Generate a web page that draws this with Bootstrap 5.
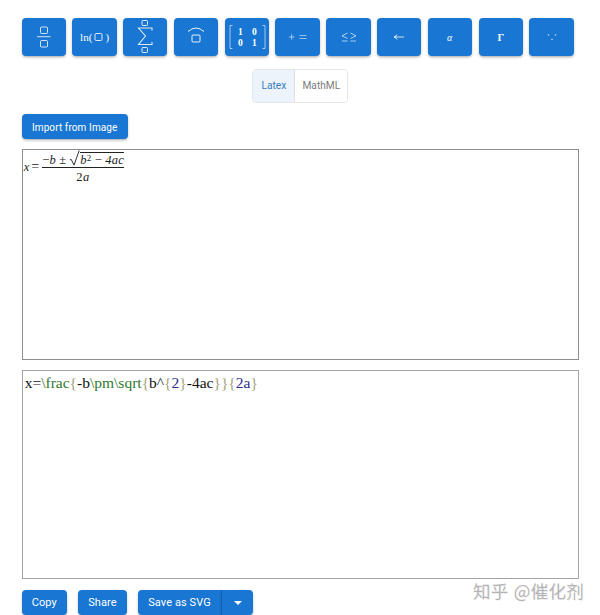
<!DOCTYPE html>
<html lang="en"><head><meta charset="utf-8"><title>Formula editor</title>
<link href="https://cdn.jsdelivr.net/npm/bootstrap@5.3.0/dist/css/bootstrap.min.css" rel="stylesheet">
<style>
html,body{height:615px;overflow:hidden;background:#fff}
body{font-family:Roboto,"Liberation Sans",sans-serif;position:relative}
.page-wrap{padding:18px 21px 0 21.7px}
.sym-bar{gap:6.4px;margin-left:-.2px}
.mui-btn{background:#1976d2;border:0;color:#fff;border-radius:4px;box-shadow:0 2px 3px -1px rgba(0,0,0,.25),0 1px 3px rgba(0,0,0,.14);font-family:Roboto,sans-serif;font-size:11px;letter-spacing:.1px;padding:1px 0 0;display:flex;align-items:center;justify-content:center;height:25px}
.mui-btn:hover{background:#1976d2;color:#fff}
.sym-btn{width:44.4px;height:38px;flex:none;padding:0}
.sym-btn svg{display:block}
.sym-btn text{font-family:"Liberation Serif",serif;fill:#fff}
.mode-row{margin-top:13px;height:34px}
.mode-group{border:1px solid #e3e6e9;border-radius:4px;overflow:hidden;display:flex;width:96px}
.mode-item{font-size:10.2px;display:flex;align-items:center;justify-content:center;background:#fff;color:#7a7a7a}
.mode-on{width:42px;background:#edf3fa;color:#3a7dbd;border-right:1px solid #dde1e5}
.mode-off{flex:1}
.import-btn{width:106px;margin-top:11px;font-size:10px}
.preview-box{height:211px;margin-top:10px;border:1px solid #8e8e8e;padding:0}
.formula{display:flex;align-items:center;font-family:"Liberation Serif",serif;font-style:italic;font-size:12.5px;color:#222;padding:0 0 0 1px;line-height:1}
.formula .eq{font-style:normal;margin:0 3px 0 2px;font-size:14px}
.frac{display:inline-flex;flex-direction:column;align-items:center}
.frac-top{border-bottom:1px solid #222;padding:0 0 1px 0;display:flex;align-items:flex-end;white-space:pre;letter-spacing:.2px}
.frac-bot{padding-top:3px;letter-spacing:.5px}
.up{font-style:normal}
.rad{display:inline-flex;align-items:flex-end;margin-left:3px}
.rad-body{border-top:1px solid #222;padding-top:1px;white-space:pre}
.formula sup{font-size:9px;font-style:normal;top:-.3em;line-height:0}
.code-box{height:209px;margin-top:10px;border:1px solid #a3a3a3;padding:3px 2px;font-family:"Liberation Serif",serif;font-size:15.5px;line-height:18px;color:#111}
.tk-cmd{color:#2f7a2f}
.tk-br{color:#a3a37e}
.tk-num{color:#2b2b8c}
.action-row{margin-top:11px;gap:11px;margin-left:-.2px}
.copy-btn{width:45.5px}
.share-btn{width:49px}
.split-wrap{width:115px;display:flex}
.split-main{width:84px;border-radius:4px 0 0 4px;border-right:1px solid #1565c0}
.split-caret{flex:1;border-radius:0 4px 4px 0;padding:0}
.caret-shape{width:0;height:0;border-left:4px solid transparent;border-right:4px solid transparent;border-top:4px solid #fff}
.watermark{position:absolute;left:473px;top:581px;font-family:"Noto Sans CJK SC",sans-serif;font-size:17.5px;line-height:20px;color:#b4b4b4;white-space:nowrap;letter-spacing:.3px;word-spacing:1px;text-shadow:1px 1px 0 rgba(0,0,0,.06)}
</style></head>
<body>
<div class="page-wrap">
  <div class="d-flex sym-bar">
    <button class="btn mui-btn sym-btn" aria-label="fraction"><svg width="24" height="30" viewBox="0 0 24 30" fill="none" stroke="#fff" stroke-opacity=".8"><rect x="8.500" y="5" width="7" height="6.500" rx="1"/><path d="M5 14.700h13.500"/><rect x="8.500" y="18.500" width="7" height="6.500" rx="1"/></svg></button>
    <button class="btn mui-btn sym-btn" aria-label="log"><svg width="32" height="20" viewBox="0 0 32 20" fill="none"><text x="2" y="14" font-size="11" stroke="none">ln(</text><rect x="17" y="6.500" width="7" height="7" rx="1.200" stroke="#fff" stroke-opacity=".85"/><text x="27.500" y="14" font-size="11" stroke="none">)</text></svg></button>
    <button class="btn mui-btn sym-btn" aria-label="sum"><svg width="24" height="36" viewBox="0 0 24 36" fill="none" stroke="#fff" stroke-opacity=".85"><rect x="9" y="1.500" width="5.500" height="5" rx=".8"/><path d="M19 11.500v-2.500H5.500l7 8-7 8.500h13.500v-2.500" stroke-width="1.100"/><rect x="9" y="28.500" width="5.500" height="5" rx=".8"/></svg></button>
    <button class="btn mui-btn sym-btn" aria-label="hat"><svg width="24" height="24" viewBox="0 0 24 24" fill="none" stroke="#fff" stroke-opacity=".9"><path d="M4 6.500Q12 -.5 20 6.500"/><rect x="8" y="10" width="8" height="7" rx="1"/></svg></button>
    <button class="btn mui-btn sym-btn" aria-label="matrix"><svg width="38" height="28" viewBox="0 0 38 28" fill="none"><path d="M4.500 2.500H2v23h2.500M34.500 2.500H37v23h-2.500" stroke="#fff" stroke-opacity=".6"/><text x="10" y="12" font-size="9.500" font-weight="700" stroke="none">1</text><text x="24" y="12" font-size="9.500" font-weight="700" stroke="none">0</text><text x="10" y="23" font-size="9.500" font-weight="700" stroke="none">0</text><text x="24" y="23" font-size="9.500" font-weight="700" stroke="none">1</text></svg></button>
    <button class="btn mui-btn sym-btn" aria-label="plus equals"><svg width="28" height="16" viewBox="0 0 28 16" fill="none" stroke="#fff" stroke-opacity=".55"><path d="M5 8h5.500M7.700 5.200v5.600M15.500 6.500h7M15.500 9.500h7"/></svg></button>
    <button class="btn mui-btn sym-btn" aria-label="less greater"><svg width="28" height="16" viewBox="0 0 28 16" fill="none" stroke="#fff" stroke-opacity=".65"><path d="M13.500 4L8 6.800l5.500 2.700M8 12h5.500M16.500 4L22 6.800l-5.500 2.700M16.500 12H22"/></svg></button>
    <button class="btn mui-btn sym-btn" aria-label="arrow"><svg width="12" height="10" viewBox="0 0 12 10" fill="none" stroke="#fff" stroke-opacity=".8"><path d="M11 5H1.500M4 2.500Q3.500 4.200 1 5Q3.500 5.800 4 7.500"/></svg></button>
    <button class="btn mui-btn sym-btn" aria-label="alpha"><svg width="14" height="14" viewBox="0 0 14 14"><text x="4" y="10.500" font-size="10" font-style="italic">α</text></svg></button>
    <button class="btn mui-btn sym-btn" aria-label="gamma"><svg width="14" height="14" viewBox="0 0 14 14"><text x="3.500" y="10.500" font-size="10.500" font-weight="700">Γ</text></svg></button>
    <button class="btn mui-btn sym-btn" aria-label="because"><svg width="14" height="12" viewBox="0 0 14 12" fill="#fff" fill-opacity=".75"><circle cx="3.500" cy="4" r=".8"/><circle cx="10.500" cy="4" r=".8"/><circle cx="7" cy="8.500" r=".8"/></svg></button>
  </div>
  <div class="d-flex justify-content-center mode-row">
    <div class="mode-group" role="group">
      <div class="mode-item mode-on">Latex</div>
      <div class="mode-item mode-off">MathML</div>
    </div>
  </div>
  <button class="btn mui-btn import-btn">Import from Image</button>
  <div class="preview-box">
    <div class="formula"><span>x</span><span class="eq">=</span>
      <span class="frac"><span class="frac-top"> <span class="up">−</span>b <span class="up">±</span><span class="rad"><svg width="11" height="16" viewBox="0 0 11 17" fill="none" stroke="#222"><path d="M0.500 10.500L2 10 5 16 10.500 .5"/></svg><span class="rad-body">b<sup>2</sup> <span class="up">−</span> 4ac</span></span></span><span class="frac-bot"><span class="up">2</span>a</span></span>
    </div>
  </div>
  <div class="code-box">x=<span class="tk-cmd">\frac</span><span class="tk-br">{</span>-b<span class="tk-cmd">\pm\sqrt</span><span class="tk-br">{</span>b^<span class="tk-br">{</span><span class="tk-num">2</span><span class="tk-br">}</span>-4ac<span class="tk-br">}</span><span class="tk-br">}</span><span class="tk-br">{</span><span class="tk-num">2a</span><span class="tk-br">}</span></div>
  <div class="d-flex action-row">
    <button class="btn mui-btn copy-btn">Copy</button>
    <button class="btn mui-btn share-btn">Share</button>
    <div class="split-wrap">
      <button class="btn mui-btn split-main">Save as SVG</button>
      <button class="btn mui-btn split-caret" aria-label="more"><span class="caret-shape"></span></button>
    </div>
  </div>
</div>
<div class="watermark">知乎 @催化剂</div>
<script src="https://cdn.jsdelivr.net/npm/bootstrap@5.3.0/dist/js/bootstrap.bundle.min.js"></script>
</body></html>
